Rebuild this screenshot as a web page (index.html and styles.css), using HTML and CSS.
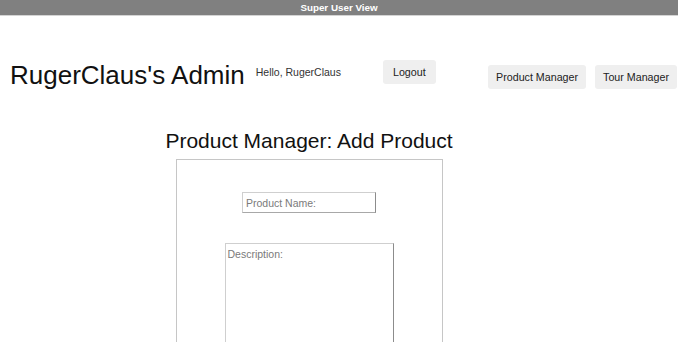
FILE: index.html
```html
<!DOCTYPE html>
<html lang="en">
<head>
    <meta charset="UTF-8">
    <meta name="viewport" content="width=device-width, initial-scale=1.0">
    <title>Admin - Add Product</title>
    <link rel="stylesheet" href="styles.css">
</head>
<body>
    <div class="superbar">Super User View</div>

    <div class="header">
        <h1 class="admin-title">RugerClaus's Admin</h1>
        <span class="hello">Hello, RugerClaus</span>
        <button class="btn logout">Logout</button>
        <div class="nav">
            <button class="btn nav-btn">Product Manager</button>
            <button class="btn nav-btn">Tour Manager</button>
        </div>
    </div>

    <div class="main">
        <h2 class="page-title">Product Manager: Add Product</h2>
        <form class="product-form">
            <input type="text" class="field name-field" placeholder="Product Name:">
            <textarea class="field desc-field" placeholder="Description:"></textarea>
        </form>
    </div>
</body>
</html>
```

FILE: styles.css
```css
/* page base */
body {
    margin: 0;
    font-family: "Liberation Sans", Arial, sans-serif;
    color: #111;
    background: #fff;
}

/* grey strip at the very top */
.superbar {
    width: 678px;
    height: 15px;
    line-height: 15px;
    background-color: #808080;
    border-bottom: 1px solid #d4d4d4;
    color: #fff;
    font-size: 9.8px;
    font-weight: bold;
    text-align: center;
}

/* title, greeting and buttons */
.header {
    display: flex;
    align-items: flex-start;
    margin-top: 44px;
}

.admin-title {
    margin: 0 0 0 10px;
    font-size: 26px;
    font-weight: normal;
    line-height: 30px;
}

.hello {
    margin: 6px 0 0 11px;
    font-size: 10.5px;
    color: #333;
}

.btn {
    height: 24px;
    border: none;
    border-radius: 3px;
    background-color: #efefef;
    font-family: "Liberation Sans", Arial, sans-serif;
    font-size: 10.7px;
    color: #222;
}

.logout {
    margin-left: 42px;
    padding: 0 10px;
}

.nav {
    display: flex;
    gap: 9px;
    margin: 5px 3px 0 auto;
}

.nav-btn {
    padding: 0 8px;
}

/* add product area */
.main {
    width: 400px;
    margin: 39px 0 0 109px;
    text-align: center;
}

.page-title {
    margin: 0 0 6px;
    font-size: 21px;
    font-weight: normal;
    line-height: 24px;
}

.product-form {
    display: flex;
    flex-direction: column;
    align-items: center;
    gap: 30px;
    width: 265px;
    height: 260px;
    margin: 0 auto;
    padding-top: 32px;
    border: 1px solid #c6c6c6;
}

.field {
    box-sizing: border-box;
    border: 1px solid #cfcfcf;
    border-right-color: #8c8c8c;
    border-bottom-color: #a8a8a8;
    font-family: "Liberation Sans", Arial, sans-serif;
    font-size: 10.5px;
    color: #333;
    outline: none;
}

.field::placeholder {
    color: #7a7a7a;
}

.name-field {
    width: 134px;
    height: 21px;
    padding: 0 3px;
}

.desc-field {
    width: 169px;
    height: 150px;
    padding: 4px 2px;
    resize: none;
}
```
